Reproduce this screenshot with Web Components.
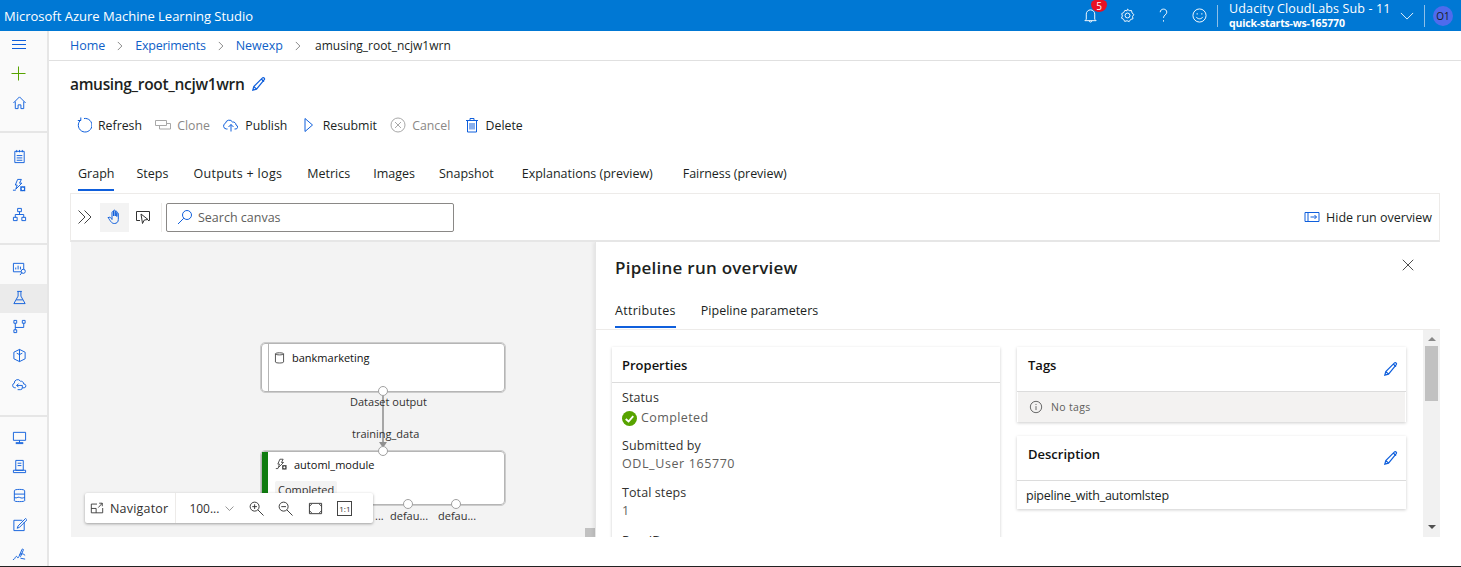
<!DOCTYPE html>
<html lang="en"><head><meta charset="utf-8"><title>Azure ML Studio</title>
<style>
html,body{margin:0;padding:0;background:#fff;font-family:"Open Sans","Noto Sans",sans-serif;font-size:13px;color:#201f1e;overflow:hidden}
</style></head><body>
<az-app>
  <az-header slot="header"></az-header>
  <az-sidebar slot="side"></az-sidebar>
  <az-breadcrumb>
    <az-crumb>Home</az-crumb>
    <az-crumb style="letter-spacing:-.25px">Experiments</az-crumb>
    <az-crumb gap="12">Newexp</az-crumb>
    <az-crumb last style="font-size:12px">amusing_root_ncjw1wrn</az-crumb>
  </az-breadcrumb>
  <az-title>amusing_root_ncjw1wrn</az-title>
  <az-commands>
    <az-cmd icon="refresh">Refresh</az-cmd>
    <az-cmd icon="clone" disabled>Clone</az-cmd>
    <az-cmd icon="publish">Publish</az-cmd>
    <az-cmd icon="play">Resubmit</az-cmd>
    <az-cmd icon="cancel" disabled>Cancel</az-cmd>
    <az-cmd icon="trash">Delete</az-cmd>
  </az-commands>
  <az-tabs>
    <az-tab active>Graph</az-tab><az-tab style="margin-left:22px">Steps</az-tab><az-tab style="margin-left:25px;letter-spacing:.3px">Outputs + logs</az-tab><az-tab style="margin-left:25px">Metrics</az-tab><az-tab style="margin-left:23px">Images</az-tab><az-tab style="margin-left:24px">Snapshot</az-tab><az-tab style="margin-left:28px">Explanations (preview)</az-tab><az-tab style="margin-left:30px;letter-spacing:-.05px">Fairness (preview)</az-tab>
  </az-tabs>
  <az-toolbar></az-toolbar>
  <az-workspace>
    <az-canvas></az-canvas>
    <az-overview></az-overview>
  </az-workspace>
</az-app>
<script>
const B='#0f5fdc';
const ICONS={
menu:'<path d="M1 3.500h14M1 7.500h14M1 11.500h14"/>',
plus:'<path d="M7.500 .5v14M.5 7.500h14"/>',
home:'<path d="M1.500 8.500 8 2l6.500 6.500M3.500 7v7.500h3v-4h3v4h3V7"/>',
notes:'<path d="M3 2.500h10v12H3zM5 1v2.500M8 1v2.500M11 1v2.500M5 7h6M5 9.500h6M5 12h6"/>',
auto:'<path d="M6 1.500h4L8 5.500h2.500L4 12l1.500-4.500H3.500z"/><circle cx="11.500" cy="11.500" r="2"/><path d="M9 9.500h5M9 13.500h5M9.500 9v5M13.500 9v5"/><path d="M1 13h3"/>',
tree:'<path d="M6 1.500h4v3.500H6zM1.500 11h4v3.500h-4zM10.500 11h4v3.500h-4zM8 5v3M3.500 11V8h9v3"/>',
monitor:'<path d="M1.500 2.500h11v9h-11zM4 9V7M6.500 9V5M9 9V6"/><circle cx="12" cy="11" r="2.200" fill="#fafafa"/><path d="m10.500 12.500-2 2.500"/>',
flask:'<path d="M5.500 1.500h5M6.500 1.500v5L2 14.500h12L9.500 6.500v-5M4.500 10.500h7"/>',
branch:'<path d="M2 1.500h3v3H2zM11 1.500h3v3h-3zM2 11.500h3v3H2zM3.500 4.500v7M3.500 9h9V4.500"/>',
cube:'<path d="M8 1.500 14 4.500v7L8 14.500 2 11.500v-7zM8 1.500v13M5 5.500 8 7l3-1.500"/>',
cloud:'<path d="M4 11.500H3A2.500 2.500 0 0 1 2.500 6.600 3.500 3.500 0 0 1 9 4.500a3 3 0 0 1 3.500 3A2 2 0 0 1 13 11.500h-2M5 9h6v2.500a2 2 0 0 1-2 2H6M7 7 5 9l2 2"/>',
desktop:'<path d="M1.500 2.500h13v8.500h-13zM8 11v2.500M4 14.500h8M4 13.500h8"/>',
server:'<path d="M4 1.500h8v10.500H4zM1.500 14.500h13v-2.500h-13zM6 4.500h4M6 7h4"/>',
db:'<path d="M2.500 3c0-1 2-1.500 5.500-1.500s5.500.5 5.500 1.500v10.500c0 .7-2 1-5.500 1s-5.500-.3-5.500-1zM2.500 6.500h11M2.500 10c3 1.800 3 -1 5.500 0s3 1 5.500 0"/>',
label:'<path d="M2 3.500h9M2 3.500v11h11v-9M14.500 1.500l-8 8-1 2.500 2.500-1 8-8z"/>',
sign:'<path d="M1 14.500c2 0 2-2 3-3s1.500 0 2 1 1-.5 1.500-1.500l3-7c.5-1.500 2-1 1.500.5l-3 7M8 9c2-1 4-1 6 1M9 13l5 1"/>',
pencil:'<path d="M1.800 14.200 2.800 10.500 11.500 1.800c.9-.9 2.700.9 1.800 1.800L5.500 13.200zM2.800 10.500l2.700 2.700M10.300 3l2.700 2.700"/>',
refresh:'<path d="M5 2.800A6.800 6.800 0 1 0 8 1.500M4.800.5v3h-3"/>',
clone:'<path d="M.5 3.500h11v5H.5zM4.500 8.500v3.500h11V6.500h-4"/>',
publish:'<path d="M4.500 12H3.500A3 3 0 0 1 2.500 6.200 3.800 3.800 0 0 1 9.500 5a3 3 0 0 1 3.500 3 2 2 0 0 1-1 4h-.5M8 14.500V7.500M5.500 10 8 7.500l2.500 2.500"/>',
play:'<path d="M4 1.500v13L11.500 8z"/>',
cancel:'<circle cx="8" cy="8" r="7"/><path d="m5 5 6 6M11 5l-6 6"/>',
trash:'<path d="M2 3.500h12M6 3.500V1.500h4v2M3.500 3.500v11.500h9V3.500M6 6v6.500M8 6v6.500M10 6v6.500"/>',
chevs:'<path d="M1.500 1.500 8 8l-6.500 6.500M7.500 1.500 14 8l-6.500 6.500"/>',
hand:'<path d="M2 8.500c1-1 2 .5 3 2V3.500c0-1.200 1.500-1.200 1.500 0V7V2c0-1.200 1.700-1.200 1.700 0v5V2.800c0-1.200 1.600-1.200 1.600 0V7.500V4.500c0-1 1.500-1 1.500 0v6c0 2.500-1.500 4-4 4-3 0-4-3-6.300-6z"/>',
select:'<path d="M5 11.500H1.500v-9h13v9H13M6 5l1.500 9.500 1.800-3.500 3.700-.5z"/>',
search:'<circle cx="10" cy="6" r="4.500"/><path d="M6.800 9.200 1 15"/>',
panel:'<path d="M1 3.500h14v9H1zM4 3.500v9M6.500 8h6M10.500 6l2 2-2 2"/>',
close:'<path d="m2 2 12 12M14 2 2 14"/>',
bell:'<path d="M3.500 12V6.500a4.500 4.500 0 0 1 9 0V12l1.500 1.500H2zM6.500 13.500c0 2 3 2 3 0"/>',
gear:'<path d="M8 1.200 9.800 2.800 12.300 2.700 12.800 5.200 14.800 7 13.400 9 13.800 11.500 11.300 12.200 9.800 14.500 7.500 13.600 5 14.300 3.800 12 1.600 10.800 2.500 8.500 1.800 6 4 4.800 5.200 2.500 7.500 3z"/><circle cx="8" cy="8" r="2.600"/>',
help:'<path d="M4.500 4.500C4.500 2.500 6 1.200 8 1.200s3.500 1.400 3.500 3.200c0 3-3.500 3-3.500 6.100M8 13v1.500"/>',
smile:'<circle cx="8" cy="8" r="7"/><path d="M4.500 9.500c1.500 2.700 5.500 2.700 7 0M5.500 5.500v1.500M10.500 5.500v1.500"/>',
down:'<path d="m1 4.500 7 7 7-7"/>',
right:'<path d="m4.500 1.500 6.500 6.500-6.500 6.500"/>',
cyl:'<path d="M3 3.500C3 1.800 13 1.800 13 3.500v10c0 1.700-10 1.700-10 0zM3 3.500c0 1.700 10 1.700 10 0"/>',
nav:'<path d="M14.500 8v5.500h-13v-10H8M1.500 8.500h5.500v5M9.500 7.500 14 2.500M10.500 2.500H14V6"/>',
zin:'<circle cx="6" cy="6" r="4.800"/><path d="m9.500 9.500 6 6M3.500 6h5M6 3.500v5"/>',
zout:'<circle cx="6" cy="6" r="4.800"/><path d="m9.500 9.500 6 6M3.500 6h5"/>',
fit:'<path d="M1.500 2.500h13v11h-13zM1.500 5.500 4 3.500M14.500 5.500 12 3.500M1.500 10.500 4 12.500M14.500 10.500 12 12.500" />',
info:'<circle cx="8" cy="8" r="6.500"/><path d="M8 7v4.500M8 4.500v1.200"/>'
};
class AzIcon extends HTMLElement{
  connectedCallback(){
    const s=this.getAttribute('size')||16,c=this.getAttribute('color')||B;
    const r=this.shadowRoot||this.attachShadow({mode:'open'});
    r.innerHTML=`<style>:host{display:inline-flex;flex:none;width:${s}px;height:${s}px}svg{display:block}</style><svg width="${s}" height="${s}" viewBox="0 0 16 16" fill="none" stroke="${c}" stroke-width="${this.getAttribute('sw')||1}">${ICONS[this.getAttribute('name')]||''}</svg>`;
  }
}
customElements.define('az-icon',AzIcon);
function comp(name,css,html){
  class C extends HTMLElement{
    constructor(){super();this.attachShadow({mode:'open'}).innerHTML=`<style>${css}</style>${html}`;}
  }
  customElements.define(name,C);
}
comp('az-app',`
:host{display:grid;grid-template-columns:49px 1fr;grid-template-rows:31px 535px;height:566px;width:1461px;border-bottom:1px solid #222;overflow:hidden}
.h{grid-column:1/3}.m{display:block;min-width:0;width:1412px;overflow:hidden}
`,`<div class="h"><slot name="header"></slot></div><slot name="side"></slot><div class="m"><slot></slot></div>`);
comp('az-header',`
:host{display:flex;align-items:center;height:31px;background:#0078d4;color:#fff;position:relative}
.t{margin-left:4px;font-size:13px;flex:1;white-space:nowrap}
.i{width:36px;display:flex;justify-content:center;position:relative}
.badge{position:absolute;left:19px;top:-8px;width:16px;height:12px;border-radius:5px 5px 8px 8px;background:#e81123;font-size:10px;line-height:12px;text-align:center}
.sep{width:1px;height:22px;background:#8dbfe8}
.acct{margin-left:11px;width:171px;line-height:15px;white-space:nowrap}
.a1{font-size:12.500px;letter-spacing:.14px}.a2{font-size:10.500px;font-weight:700;letter-spacing:-.18px}
.av{width:20px;height:20px;border-radius:50%;background:#4f6bed;color:#1a1a1a;font-size:10px;line-height:20px;text-align:center;margin:0 8px 0 8px}
`,`<div class="t">Microsoft Azure Machine Learning Studio</div>
<div class="i" style="margin-right:1px"><az-icon name="bell" color="#fff" size="15"></az-icon><span class="badge">5</span></div>
<div class="i"><az-icon name="gear" color="#fff" size="15"></az-icon></div>
<div class="i"><az-icon name="help" color="#fff" size="15"></az-icon></div>
<div class="i"><az-icon name="smile" color="#fff" size="15"></az-icon></div>
<div class="sep"></div>
<div class="acct"><div class="a1">Udacity CloudLabs Sub - 11</div><div class="a2">quick-starts-ws-165770</div></div>
<az-icon name="down" color="#fff" size="14"></az-icon><div style="width:10px"></div>
<div class="sep"></div><div class="av">O1</div>`);
comp('az-sidebar',`
:host{display:block;height:535px;background:#fafafa;border-right:2px solid #e6e6e6;box-sizing:border-box;overflow:hidden}
.g{border-bottom:2px solid #e6e6e6;padding:0 0 13px}.g+.g{padding-top:10px}
.b{height:29px;box-sizing:border-box;padding:0 9px 2px 0;display:flex;align-items:center;justify-content:center}
.on{background:#ebebeb}
`,`<div class="g"><div class="b"><az-icon size="16" name="menu"></az-icon></div><div class="b"><az-icon size="16" name="plus" color="#57a300"></az-icon></div><div class="b"><az-icon size="15" name="home"></az-icon></div></div>
<div class="g"><div class="b"><az-icon size="15" name="notes"></az-icon></div><div class="b"><az-icon size="15" name="auto"></az-icon></div><div class="b"><az-icon size="15" name="tree"></az-icon></div></div>
<div class="g" style="padding-bottom:15px"><div class="b"><az-icon size="15" name="monitor"></az-icon></div><div class="b on"><az-icon size="15" name="flask"></az-icon></div><div class="b"><az-icon size="15" name="branch"></az-icon></div><div class="b"><az-icon size="15" name="cube"></az-icon></div><div class="b"><az-icon size="15" name="cloud"></az-icon></div></div>
<div class="g" style="border:0;padding-top:7px"><div class="b"><az-icon size="15" name="desktop"></az-icon></div><div class="b"><az-icon size="15" name="server"></az-icon></div><div class="b"><az-icon size="15" name="db"></az-icon></div><div class="b"><az-icon size="15" name="label"></az-icon></div><div class="b"><az-icon size="15" name="sign"></az-icon></div></div>`);
comp('az-breadcrumb',`:host{display:flex;align-items:center;height:29px;border-bottom:1px solid #e0e0e0;padding-left:21px;font-size:12.500px}`,`<slot></slot>`);
class AzCrumb extends HTMLElement{
  connectedCallback(){
    const l=this.hasAttribute('last'),g=this.getAttribute('gap')||10;
    this.attachShadow({mode:'open'}).innerHTML=`<style>:host{display:flex;align-items:center;white-space:nowrap;color:${l?'#201f1e':'#0f5fc8'}}az-icon{margin:0 ${g}px 0 10px}</style><slot></slot>${l?'':'<az-icon name="right" color="#444" size="10"></az-icon>'}`;
  }
}
customElements.define('az-crumb',AzCrumb);
comp('az-title',`
:host{display:flex;align-items:center;gap:7px;height:46px;padding-left:21px;font-size:15.500px;letter-spacing:-.33px;font-weight:600;color:#201f1e}
`,`<slot></slot><az-icon name="pencil" sw="1.200"></az-icon>`);
comp('az-commands',`:host{display:flex;gap:13.300px;padding:1px 0 0 27px;height:26px;align-items:center;margin-top:4px}`,`<slot></slot>`);
class AzCmd extends HTMLElement{
  connectedCallback(){
    const d=this.hasAttribute('disabled');
    this.attachShadow({mode:'open'}).innerHTML=`<style>:host{display:flex;align-items:center;gap:6px;font-size:12.300px;color:${d?'#8a8886':'#201f1e'};white-space:nowrap}</style><az-icon name="${this.getAttribute('icon')}" color="${d?'#a8a8a8':B}"></az-icon><slot></slot>`;
  }
}
customElements.define('az-cmd',AzCmd);
comp('az-tabs',`:host{display:flex;padding:27px 0 0 29px;height:28px}`,`<slot></slot>`);
class AzTab extends HTMLElement{
  connectedCallback(){
    const a=this.hasAttribute('active');
    this.attachShadow({mode:'open'}).innerHTML=`<style>:host{display:block;font-size:12.500px;line-height:18px;height:26px;white-space:nowrap;box-sizing:border-box;color:#201f1e;${a?'box-shadow:inset 0 -2px 0 #0f5fdc':''}}</style><slot></slot>`;
  }
}
customElements.define('az-tab',AzTab);
comp('az-toolbar',`
:host{display:flex;align-items:center;margin:0 21px 0 21px;border:1px solid #edebe9;border-bottom:2px solid #e6e6e6;box-sizing:border-box;height:49px;font-size:12.500px}
.b{width:29px;height:29px;display:flex;align-items:center;justify-content:center}
.on{background:#f3f3f3}
.sep{width:1px;height:29px;background:#edebe9;margin:0 4px 0 3px}
.s{width:288px;height:29px;box-sizing:border-box;border:1px solid #8a8886;border-radius:2px;display:flex;align-items:center;gap:5px;padding-left:10px;color:#605e5c}
.r{margin-left:auto;display:flex;align-items:center;gap:6px;padding-right:7px}
`,`<az-icon name="chevs" color="#444" style="margin:0 7px 0 6px"></az-icon><div class="b on"><az-icon name="hand"></az-icon></div><div class="b"><az-icon name="select" color="#333" style="margin-left:-2px"></az-icon></div><div class="sep"></div>
<div class="s"><az-icon name="search"></az-icon><span>Search canvas</span></div><div class="r"><az-icon name="panel"></az-icon><span>Hide run overview</span></div>`);
comp('az-workspace',`:host{display:flex;height:295px;margin:0 21px 0 22px;width:1369px;overflow:hidden}`,`<slot></slot>`);
comp('az-canvas',`
:host{display:block;position:relative;width:524px;height:295px;background:#f3f3f3;overflow:hidden;font-size:11px;color:#323130;flex:none}
.n{position:absolute;left:190px;width:244px;background:#fff;border:1px solid #b5b5b5;border-radius:4px;box-sizing:border-box;outline:.5px solid #ccc}
.strip{position:absolute;left:0;top:0;bottom:0;width:6px;border-right:1px solid #b5b5b5}
.g{background:#107c10;width:6px;border:0}
.nm{position:absolute;left:13px;top:6px;font-size:11px;color:#111;display:flex;gap:6px;align-items:center;white-space:nowrap}
.p{position:absolute;width:10px;height:10px;border-radius:50%;border:1px solid #a0a0a0;background:#fff;box-sizing:border-box}
.l{position:absolute;white-space:nowrap}
.e{position:absolute;left:311px;top:154px;width:2px;height:50px;background:#a6a6a6}
.a{position:absolute;left:308px;top:200px;border:4px solid transparent;border-top:6px solid #909090;border-bottom:0}
.tag{position:absolute;left:13px;top:29px;background:#f3f3f3;padding:0 3px;border-radius:2px;font-size:11px;line-height:17px;white-space:nowrap}
.nav{position:absolute;left:14px;top:251px;width:288px;height:30px;background:#fff;box-shadow:0 1px 3px rgba(0,0,0,.35);border-radius:2px;display:flex;align-items:center;font-size:12.500px;color:#323130}
.nav .c{display:flex;align-items:center;gap:6px;padding:0 7px 0 5px;height:100%;border-right:1px solid #edebe9;white-space:nowrap}
.nav .z{margin-left:13px;width:36px;white-space:nowrap;font-size:12px}
.sb{position:absolute;right:0;bottom:0;width:10px;height:9px;background:#c1c1c1}
`,`<div class="n" style="top:101px;height:49px"><div class="strip"></div><div class="nm" style="left:11px"><az-icon name="cyl" color="#333" size="13"></az-icon>bankmarketing</div></div>
<div class="n" style="top:209px;height:54px"><div class="strip g"></div><div class="nm" style="top:5px"><az-icon name="auto" color="#333" size="13"></az-icon>automl_module</div><div class="tag">Completed</div></div>
<div class="e"></div><div class="a"></div>
<div class="p" style="left:307px;top:144px"></div><div class="p" style="left:307px;top:204px"></div>
<div class="p" style="left:332px;top:257px"></div><div class="p" style="left:380px;top:257px"></div>
<div class="l" style="left:279px;top:152px">Dataset output</div><div class="l" style="left:281px;top:184px">training_data</div>
<div class="l" style="left:304px;top:266px">...</div><div class="l" style="left:319px;top:266px">defau...</div><div class="l" style="left:367px;top:266px">defau...</div>
<div class="nav"><div class="c"><az-icon name="nav" color="#333" size="14"></az-icon><span style="letter-spacing:.2px">Navigator</span></div><div class="z">100...</div><az-icon name="down" color="#444" size="9"></az-icon>
<az-icon name="zin" color="#333" size="15" style="margin-left:15px"></az-icon><az-icon name="zout" color="#333" size="15" style="margin-left:14px"></az-icon><az-icon name="fit" color="#333" size="15" style="margin-left:15px"></az-icon><span style="margin-left:14px;width:13px;height:13px;border:1px solid #444;font-size:8px;line-height:13px;text-align:center;color:#333">1:1</span></div>
<div class="sb"></div>`);
comp('az-overview',`
:host{display:flex;flex-direction:column;flex:1;min-width:0;background:#fff;border-left:1px solid #e6e6e6;box-shadow:-2px 0 3px rgba(0,0,0,.06);position:relative;overflow:hidden}
.top{display:flex;justify-content:space-between;align-items:center;height:51px;padding:0 25px 0 19px}
.top az-icon{margin-top:-6px}
h2{margin:0;font-size:17px;letter-spacing:.25px;font-weight:600;color:#201f1e}
.tabs{display:flex;gap:25px;height:36px;padding-left:19px;border-bottom:1px solid #edebe9;font-size:12.500px;flex:none}
.tabs span{height:35px;line-height:36px;box-sizing:border-box}
.tabs .on{box-shadow:inset 0 -2px 0 #0f5fdc;letter-spacing:.3px}
.body{flex:1;display:flex;min-height:0;overflow:hidden}
.cols{flex:1;display:grid;grid-template-columns:388px 389px;gap:17px;padding:17px 17px 0 16px;overflow:hidden;align-items:start}
.side{display:flex;flex-direction:column;gap:14px}
.sc{width:17px;flex:none;background:#f1f1f1;position:relative;display:flex;flex-direction:column;align-items:center}
.up{border:4px solid transparent;border-bottom:4px solid #888;border-top:0;margin-top:7px}
.th{width:13px;height:55px;background:#c1c1c1;margin-top:5px}
.dn{border:4px solid transparent;border-top:4px solid #505050;border-bottom:0;margin-top:auto;margin-bottom:8px}
`,`<div class="top"><h2>Pipeline run overview</h2><az-icon name="close" color="#333" size="14"></az-icon></div>
<div class="tabs"><span class="on">Attributes</span><span>Pipeline parameters</span></div>
<div class="body"><div class="cols">
<az-card head="Properties" style="height:400px"><az-prop label="Status"><az-status>Completed</az-status></az-prop><az-prop label="Submitted by" style="letter-spacing:.6px">ODL_User 165770</az-prop><az-prop label="Total steps" style="margin-top:-1px">1</az-prop><az-prop label="Run ID"></az-prop></az-card>
<div class="side"><az-card head="Tags" edit tall><az-notags>No tags</az-notags></az-card><az-card head="Description" edit tall><div style="padding:6px 9px 4px;line-height:18px;font-size:12.500px;letter-spacing:-.25px">pipeline_with_automlstep</div></az-card></div>
</div><div class="sc"><i class="up"></i><i class="th"></i><i class="dn"></i></div></div>`);
class AzCard extends HTMLElement{
  connectedCallback(){
    const e=this.hasAttribute('edit'),t=this.hasAttribute('tall');
    this.attachShadow({mode:'open'}).innerHTML=`<style>:host{display:block;background:#fff;box-shadow:0 1px 3px rgba(0,0,0,.2)}
.h{display:flex;justify-content:space-between;height:${t?44:35}px;box-sizing:content-box;border-bottom:1px solid #dcdcdc;padding:0 7px 0 ${t?11:10}px;font-size:13px;font-weight:600;color:#111;line-height:36px}
az-icon{margin-top:14px}</style><div class="h"><span>${this.getAttribute('head')}</span>${e?'<az-icon name="pencil" sw="1.200"></az-icon>':''}</div><slot></slot>`;
  }
}
customElements.define('az-card',AzCard);
comp('az-notags',`:host{display:flex;align-items:center;gap:8px;height:30px;background:#f3f2f1;padding-left:11px;margin:0 1px;font-size:10.500px;color:#605e5c;letter-spacing:.35px}`,`<az-icon name="info" color="#555" size="14"></az-icon><slot></slot>`);
class AzProp extends HTMLElement{
  connectedCallback(){
    this.attachShadow({mode:'open'}).innerHTML=`<style>:host{display:block;padding:6px 10px 0;height:42px;font-size:12.500px;line-height:18px;color:#605e5c}.l{color:#323130;letter-spacing:.1px}</style><div class="l">${this.getAttribute('label')}</div><slot></slot>`;
  }
}
customElements.define('az-prop',AzProp);
comp('az-status',`:host{display:flex;align-items:center;gap:4px;margin-top:2px;letter-spacing:.4px}svg{display:block}`,`<svg width="15" height="15" viewBox="0 0 16 16"><circle cx="8" cy="8" r="8" fill="#57a300"/><path d="m4 8.500 3 2.700 5-5.700" fill="none" stroke="#fff" stroke-width="2"/></svg><slot></slot>`);
</script>
</body></html>
